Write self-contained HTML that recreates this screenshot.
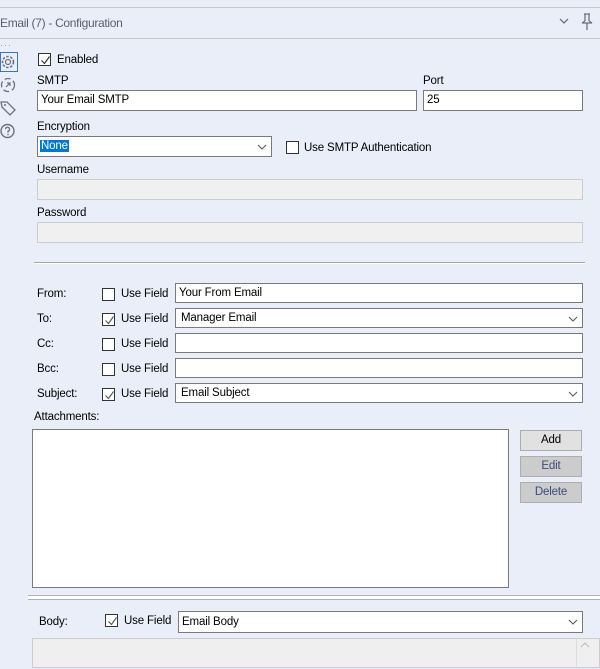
<!DOCTYPE html>
<html><head><style>
*{box-sizing:border-box;margin:0;padding:0}
body{width:600px;height:664px;background:#e9eef8;font-family:"Liberation Sans",Arial,sans-serif;font-size:11.5px;letter-spacing:-0.15px;color:#000;position:relative;overflow:hidden}
.a{position:absolute}
.t{position:absolute;line-height:14px;white-space:nowrap}
.in{position:absolute;background:#fff;border:1px solid #7a7a7a;height:21px;line-height:19px;padding-left:3px}
.dis{position:absolute;background:#f0f0f0;border:1px solid #ccc;height:21px}
.cb{position:absolute;width:13px;height:13px;border:1px solid #333;background:#fff}
.cb svg{position:absolute;left:1px;top:1px}
.dd svg{position:absolute;right:4px;top:7px}
.btn{position:absolute;left:520px;width:62px;height:21px;border:1px solid #adadad;text-align:center;line-height:19px}
</style></head><body>
<div class="a" style="left:0;top:7px;width:600px;height:1px;background:#c8c8c8"></div>
<div class="t" style="left:0;top:16px;color:#5a5f6a;font-size:12px;letter-spacing:-0.3px">Email (7) - Configuration</div>
<svg class="a" style="left:558px;top:16px" width="12" height="10"><path d="M2 3l4 4 4-4" fill="none" stroke="#6b7280" stroke-width="1.3"/></svg>
<svg class="a" style="left:580px;top:13px" width="14" height="18"><path d="M4 1h6M5 1v7M9 1v7M2 10h10M5 8l-3 2M9 8l3 2M7 10v7" fill="none" stroke="#6b7280" stroke-width="1.3"/></svg>
<div class="a" style="left:0;top:38px;width:600px;height:1px;background:#c8c8c8"></div>
<div class="a" style="left:0;top:40px;font-size:9px;color:#999;letter-spacing:1px">···</div>
<div class="a" style="left:0;top:52px;width:18px;height:20px;border:1px solid #3a76c8"></div>
<svg class="a" style="left:0;top:54px" width="16" height="16"><circle cx="8" cy="8" r="2.5" fill="none" stroke="#6b7280" stroke-width="1.2"/><circle cx="8" cy="8" r="5.5" fill="none" stroke="#6b7280" stroke-width="1.6" stroke-dasharray="2.5 1.5"/></svg>
<svg class="a" style="left:0;top:77px" width="16" height="16"><circle cx="8" cy="8" r="6.5" fill="none" stroke="#6b7280" stroke-width="1.3" stroke-dasharray="6 3"/><path d="M6 10l4-4M7 6h3v3" fill="none" stroke="#6b7280" stroke-width="1.2"/></svg>
<svg class="a" style="left:0;top:100px" width="16" height="16"><path d="M1 2h6l8 8-5 5-8-8z" fill="none" stroke="#6b7280" stroke-width="1.3"/><circle cx="5" cy="5" r="1" fill="#6b7280"/></svg>
<svg class="a" style="left:0;top:123px" width="16" height="16"><circle cx="7.5" cy="8" r="6.5" fill="none" stroke="#6b7280" stroke-width="1.4"/><path d="M5.5 6.2a2 2 0 1 1 2.5 2v1.5" fill="none" stroke="#6b7280" stroke-width="1.3"/><circle cx="8" cy="11.5" r=".8" fill="#6b7280"/></svg>

<div class="cb" style="left:38px;top:53px"><svg width="11" height="11"><path d="M1.5 5.5l3 3 5-7" fill="none" stroke="#333" stroke-width="1.2"/></svg></div>
<div class="t" style="left:57px;top:53px">Enabled</div>
<div class="t" style="left:37px;top:74px">SMTP</div>
<div class="in" style="left:37px;top:90px;width:380px">Your Email SMTP</div>
<div class="t" style="left:423px;top:74px">Port</div>
<div class="in" style="left:423px;top:90px;width:160px">25</div>
<div class="t" style="left:37px;top:120px">Encryption</div>
<div class="in dd" style="left:37px;top:136px;width:235px;padding-left:2px"><span style="background:#0078d7;color:#fff;padding:0 1px">None</span><svg width="10" height="6"><path d="M1 1l4 4 4-4" fill="none" stroke="#555"/></svg></div>
<div class="cb" style="left:286px;top:141px"></div>
<div class="t" style="left:304px;top:141px">Use SMTP Authentication</div>
<div class="t" style="left:37px;top:163px">Username</div>
<div class="dis" style="left:37px;top:179px;width:546px"></div>
<div class="t" style="left:37px;top:206px">Password</div>
<div class="dis" style="left:37px;top:222px;width:546px"></div>
<div class="a" style="left:34px;top:262px;width:551px;height:2px;background:#a8a8a8;border-bottom:1px solid #fff"></div>

<div class="t" style="left:37px;top:287px">From:</div>
<div class="cb" style="left:102px;top:288px"></div>
<div class="t" style="left:121px;top:287px">Use Field</div>
<div class="in" style="left:175px;top:283px;width:408px;height:20px;line-height:18px">Your From Email</div>

<div class="t" style="left:37px;top:312px">To:</div>
<div class="cb" style="left:102px;top:313px"><svg width="11" height="11"><path d="M1.5 5.5l3 3 5-7" fill="none" stroke="#555" stroke-width="1.1"/></svg></div>
<div class="t" style="left:121px;top:312px">Use Field</div>
<div class="in dd" style="left:175px;top:308px;width:408px;height:20px;line-height:18px;padding-left:5px">Manager Email<svg width="10" height="6"><path d="M1 1l4 4 4-4" fill="none" stroke="#555"/></svg></div>

<div class="t" style="left:37px;top:337px">Cc:</div>
<div class="cb" style="left:102px;top:338px"></div>
<div class="t" style="left:121px;top:337px">Use Field</div>
<div class="in" style="left:175px;top:333px;width:408px;height:20px"></div>

<div class="t" style="left:37px;top:362px">Bcc:</div>
<div class="cb" style="left:102px;top:363px"></div>
<div class="t" style="left:121px;top:362px">Use Field</div>
<div class="in" style="left:175px;top:358px;width:408px;height:20px"></div>

<div class="t" style="left:37px;top:387px">Subject:</div>
<div class="cb" style="left:102px;top:388px"><svg width="11" height="11"><path d="M1.5 5.5l3 3 5-7" fill="none" stroke="#555" stroke-width="1.1"/></svg></div>
<div class="t" style="left:121px;top:387px">Use Field</div>
<div class="in dd" style="left:175px;top:383px;width:408px;height:20px;line-height:18px;padding-left:5px">Email Subject<svg width="10" height="6"><path d="M1 1l4 4 4-4" fill="none" stroke="#555"/></svg></div>

<div class="t" style="left:34px;top:410px">Attachments:</div>
<div class="a" style="left:32px;top:429px;width:477px;height:159px;background:#fff;border:1px solid #7a7a7a"></div>
<div class="btn" style="top:430px;background:#e1e1e1">Add</div>
<div class="btn" style="top:456px;background:#cccccc;color:#3b4a7a">Edit</div>
<div class="btn" style="top:482px;background:#cccccc;color:#3b4a7a">Delete</div>

<div class="a" style="left:28px;top:595px;width:572px;height:5px;border-top:1px solid #b0b0b0;border-bottom:1px solid #b0b0b0;background:#fff"></div>
<div class="t" style="left:39px;top:615px">Body:</div>
<div class="cb" style="left:105px;top:614px"><svg width="11" height="11"><path d="M1.5 5.5l3 3 5-7" fill="none" stroke="#555" stroke-width="1.1"/></svg></div>
<div class="t" style="left:124px;top:614px">Use Field</div>
<div class="in dd" style="left:178px;top:611px;width:405px;height:22px;line-height:20px">Email Body<svg width="10" height="6"><path d="M1 1l4 4 4-4" fill="none" stroke="#555"/></svg></div>
<div class="a" style="left:32px;top:638px;width:568px;height:30px;background:#efefef;border:1px solid #ccc"></div>
<div class="a" style="left:576px;top:639px;width:1px;height:30px;background:#ddd"></div>
<svg class="a" style="left:580px;top:642px" width="10" height="6"><path d="M1 5l4-4 4 4" fill="none" stroke="#bbb"/></svg>
</body></html>
